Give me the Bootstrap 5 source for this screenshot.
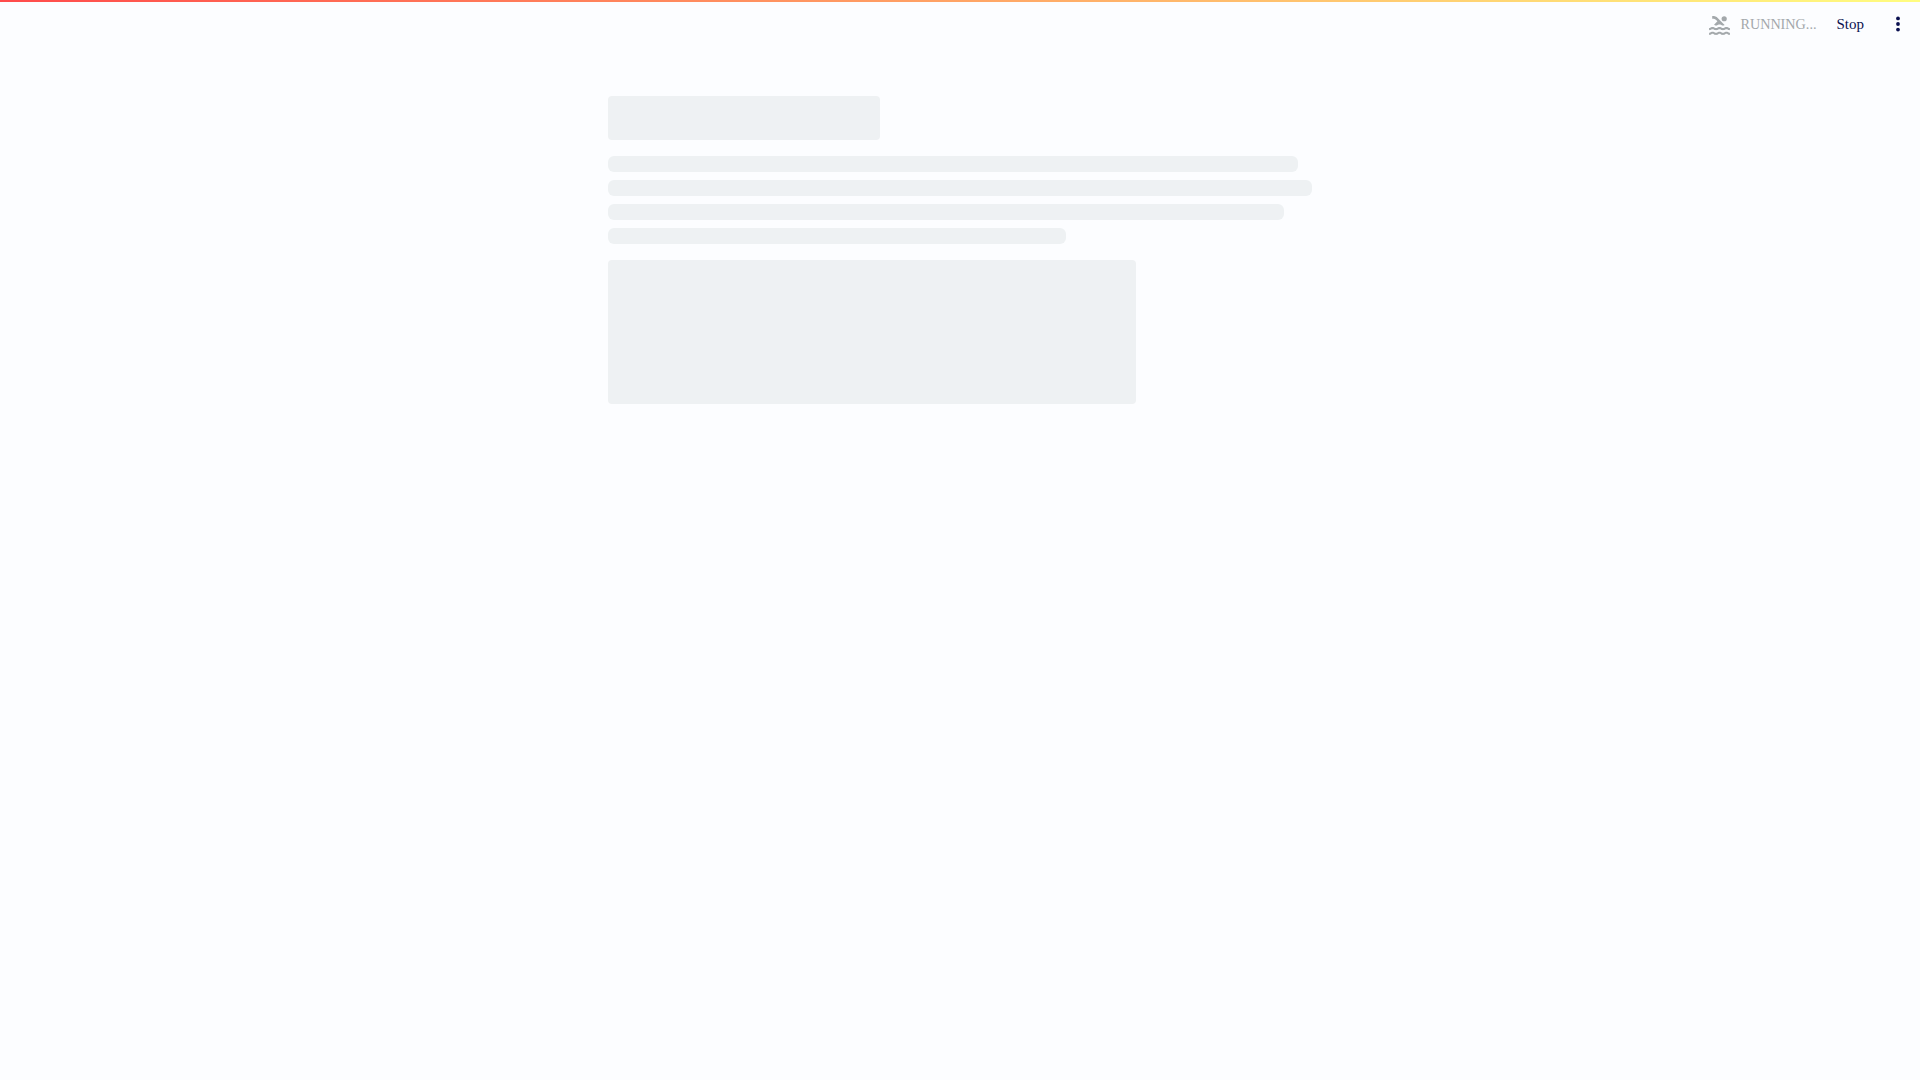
<!DOCTYPE html>
<html lang="en">
<head>
<meta charset="utf-8">
<title>Running</title>
<link href="https://cdn.jsdelivr.net/npm/bootstrap@5.3.0/dist/css/bootstrap.min.css" rel="stylesheet">
<script src="https://cdn.jsdelivr.net/npm/bootstrap@5.3.0/dist/js/bootstrap.bundle.min.js"></script>
<style>
body { background: #fcfdff; min-height: 1080px; font-family: "Liberation Serif", "DejaVu Serif", serif; }
.top-strip { height: 2px; background: linear-gradient(90deg, #ff4b4b, #fffd80); }
.app-head { height: 44px; padding: 0 12px 0 0; }
.status-run { color: #a3a8ab; font-size: 14.2px; padding-top: 2px; }
.pool-ico { width: 25px; height: 25px; fill: #a3a8ab; margin-top: 2px; }
.stop-act { color: #0a1050; font-size: 15px; margin-left: 20px; padding-top: 1px; }
.kebab-act { width: 20px; margin-left: 24px; }
.kebab-act svg { width: 6px; height: 16px; fill: #0a1050; }
.page-col { width: 704px; padding-top: 50px; }
.skel { background: #eef1f3; border-radius: 4px; }
.skel-title { height: 44px; width: 272px; margin-bottom: 16px; }
.skel-line { height: 16px; border-radius: 6px; margin-bottom: 8px; }
.skel-block { height: 144px; width: 528px; margin-top: 16px; }
.w-a { width: 690px; } .w-b { width: 704px; } .w-c { width: 676px; } .w-d { width: 458px; margin-bottom: 0; }
</style>
</head>
<body>
<div class="top-strip"></div>
<header class="app-head d-flex align-items-center justify-content-end">
  <div class="d-flex align-items-center gap-2">
    <svg class="pool-ico" viewBox="0 0 24 24" aria-hidden="true"><path d="M22 21c-1.11 0-1.73-.37-2.18-.64-.37-.22-.6-.36-1.15-.36-.56 0-.78.13-1.15.36-.46.27-1.07.64-2.18.64s-1.73-.37-2.18-.64c-.37-.22-.6-.36-1.15-.36-.56 0-.78.13-1.15.36-.46.27-1.08.64-2.19.64-1.11 0-1.73-.37-2.18-.64-.37-.23-.6-.36-1.15-.36s-.78.13-1.15.36c-.46.27-1.08.64-2.19.64v-2c.56 0 .78-.13 1.15-.36.46-.27 1.08-.64 2.19-.64s1.73.37 2.18.64c.37.23.59.36 1.15.36.56 0 .78-.13 1.15-.36.46-.27 1.08-.64 2.19-.64 1.11 0 1.73.37 2.18.64.37.22.6.36 1.15.36s.78-.13 1.15-.36c.45-.27 1.07-.64 2.18-.64s1.73.37 2.18.64c.37.23.59.36 1.15.36v2zm0-4.5c-1.11 0-1.73-.37-2.18-.64-.37-.22-.6-.36-1.15-.36-.56 0-.78.13-1.15.36-.45.27-1.07.64-2.18.64s-1.73-.37-2.18-.64c-.37-.22-.6-.36-1.15-.36-.56 0-.78.13-1.15.36-.45.27-1.07.64-2.18.64s-1.73-.37-2.18-.64c-.37-.22-.6-.36-1.15-.36s-.78.13-1.15.36c-.47.27-1.09.64-2.2.64v-2c.56 0 .78-.13 1.15-.36.45-.27 1.07-.64 2.18-.64s1.73.37 2.18.64c.37.22.6.36 1.15.36.56 0 .78-.13 1.15-.36.45-.27 1.07-.64 2.18-.64s1.73.37 2.18.64c.37.22.6.36 1.15.36s.78-.13 1.15-.36c.45-.27 1.07-.64 2.18-.64s1.73.37 2.18.64c.37.22.6.36 1.15.36v2zM8.67 12c.56 0 .78-.13 1.15-.36.46-.27 1.08-.64 2.19-.64 1.11 0 1.73.37 2.18.64.37.22.6.36 1.15.36s.78-.13 1.15-.36c.12-.07.26-.15.41-.23L10.48 5C8.93 3.45 7.5 2.99 5 3v2.5c1.82-.01 2.89.39 4 1.5l1 1-3.25 3.25c.31.12.56.27.77.39.37.23.59.36 1.15.36z"/><circle cx="16.5" cy="5.5" r="2.5"/></svg>
    <span class="status-run text-uppercase">Running...</span>
  </div>
  <span class="stop-act">Stop</span>
  <span class="kebab-act d-flex justify-content-center"><svg viewBox="0 0 6 16" aria-hidden="true"><circle cx="3" cy="2.4" r="1.9"/><circle cx="3" cy="8" r="1.9"/><circle cx="3" cy="13.6" r="1.9"/></svg></span>
</header>
<main class="page-col mx-auto">
  <div class="skel skel-title"></div>
  <div class="skel skel-line w-a"></div>
  <div class="skel skel-line w-b"></div>
  <div class="skel skel-line w-c"></div>
  <div class="skel skel-line w-d"></div>
  <div class="skel skel-block"></div>
</main>
</body>
</html>
